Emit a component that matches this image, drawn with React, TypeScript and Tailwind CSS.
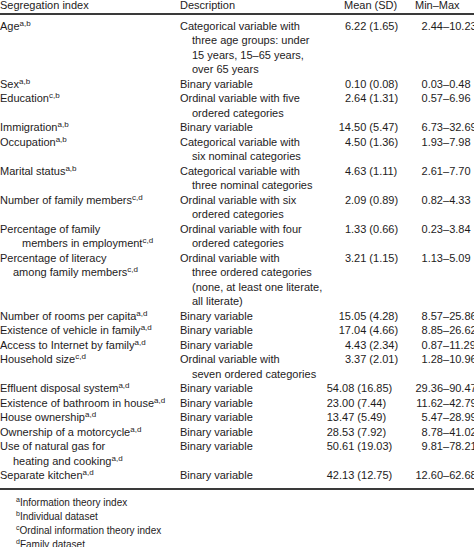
import * as React from "react"

type Row = {
  name: string[]
  sup: string
  indent?: string
  desc: string[]
  mean: string
  range: string
  late?: boolean
}

const rows: Row[] = [
  { name: ["Age"], sup: "a,b", desc: ["Categorical variable with", "three age groups: under", "15 years, 15–65 years,", "over 65 years"], mean: "6.22 (1.65)", range: "2.44–10.23" },
  { name: ["Sex"], sup: "a,b", desc: ["Binary variable"], mean: "0.10 (0.08)", range: "0.03–0.48" },
  { name: ["Education"], sup: "c,b", desc: ["Ordinal variable with five", "ordered categories"], mean: "2.64 (1.31)", range: "0.57–6.96" },
  { name: ["Immigration"], sup: "a,b", desc: ["Binary variable"], mean: "14.50 (5.47)", range: "6.73–32.69" },
  { name: ["Occupation"], sup: "a,b", desc: ["Categorical variable with", "six nominal categories"], mean: "4.50 (1.36)", range: "1.93–7.98" },
  { name: ["Marital status"], sup: "a,b", desc: ["Categorical variable with", "three nominal categories"], mean: "4.63 (1.11)", range: "2.61–7.70" },
  { name: ["Number of family members"], sup: "c,d", desc: ["Ordinal variable with six", "ordered categories"], mean: "2.09 (0.89)", range: "0.82–4.33" },
  { name: ["Percentage of family", "members in employment"], sup: "c,d", indent: "pl-[22px]", desc: ["Ordinal variable with four", "ordered categories"], mean: "1.33 (0.66)", range: "0.23–3.84" },
  { name: ["Percentage of literacy", "among family members"], sup: "c,d", desc: ["Ordinal variable with", "three ordered categories", "(none, at least one literate,", "all literate)"], mean: "3.21 (1.15)", range: "1.13–5.09" },
  { name: ["Number of rooms per capita"], sup: "a,d", desc: ["Binary variable"], mean: "15.05 (4.28)", range: "8.57–25.86" },
  { name: ["Existence of vehicle in family"], sup: "a,d", desc: ["Binary variable"], mean: "17.04 (4.66)", range: "8.85–26.62" },
  { name: ["Access to Internet by family"], sup: "a,d", desc: ["Binary variable"], mean: "4.43 (2.34)", range: "0.87–11.29" },
  { name: ["Household size"], sup: "c,d", desc: ["Ordinal variable with", "seven ordered categories"], mean: "3.37 (2.01)", range: "1.28–10.96" },
  { name: ["Effluent disposal system"], sup: "a,d", desc: ["Binary variable"], mean: "54.08 (16.85)", range: "29.36–90.47", late: true },
  { name: ["Existence of bathroom in house"], sup: "a,d", desc: ["Binary variable"], mean: "23.00 (7.44)", range: "11.62–42.79", late: true },
  { name: ["House ownership"], sup: "a,d", desc: ["Binary variable"], mean: "13.47 (5.49)", range: "5.47–28.99", late: true },
  { name: ["Ownership of a motorcycle"], sup: "a,d", desc: ["Binary variable"], mean: "28.53 (7.92)", range: "8.78–41.02", late: true },
  { name: ["Use of natural gas for", "heating and cooking"], sup: "a,d", desc: ["Binary variable"], mean: "50.61 (19.03)", range: "9.81–78.21", late: true },
  { name: ["Separate kitchen"], sup: "a,d", desc: ["Binary variable"], mean: "42.13 (12.75)", range: "12.60–62.68", late: true },
]

const notes = [
  ["a", "Information theory index"],
  ["b", "Individual dataset"],
  ["c", "Ordinal information theory index"],
  ["d", "Family dataset"],
]

function TableRow({ row }: { row: Row }) {
  const dot = row.mean.indexOf(".")
  const int = row.mean.slice(0, dot)
  const dec = row.mean.slice(dot)
  const [lo, hi] = row.range.split("–")
  return (
    <div className="grid grid-cols-[180px_146px_89px_1fr]">
      <div>
        {row.name.map((line, i) => (
          <div key={i} className={i === 0 ? "" : row.indent ?? "pl-[13px]"}>
            {line}
            {i === row.name.length - 1 && <sup className="text-[8px]">{row.sup}</sup>}
          </div>
        ))}
      </div>
      <div>
        {row.desc.map((line, i) => (
          <div key={i} className={i === 0 ? "" : "pl-[12px]"}>
            {line}
          </div>
        ))}
      </div>
      <div className="whitespace-nowrap">
        <span className={row.late ? "inline-block w-[13px] text-right" : "inline-block w-[25px] text-right"}>
          {int}
        </span>
        {dec}
      </div>
      <div className="whitespace-nowrap">
        <span className="inline-block w-[28px] text-right">{lo}</span>–{hi}
      </div>
    </div>
  )
}

export default function App() {
  return (
    <div className="w-[474px] h-[547px] overflow-hidden bg-white text-[#1e1b1c] font-['Liberation_Sans',Arial,sans-serif] text-[11px] leading-[14.5px]">
      <div className="-mt-[2px] w-[490px]">
        <div className="grid grid-cols-[180px_146px_89px_1fr] border-b-2 border-[#3a3a3a]">
          <div>Segregation index</div>
          <div>Description</div>
          <div className="pl-[18px]">Mean (SD)</div>
          <div>Min–Max</div>
        </div>
        <div className="pt-[4px] pb-[5px] border-b-2 border-[#3a3a3a]">
          {rows.map((row, i) => (
            <TableRow key={i} row={row} />
          ))}
        </div>
        <div className="pt-[6px] pl-[16px] text-[10px] leading-[14px]">
          {notes.map(([k, t]) => (
            <div key={k}>
              <sup className="text-[7px]">{k}</sup>
              {t}
            </div>
          ))}
        </div>
      </div>
    </div>
  )
}
